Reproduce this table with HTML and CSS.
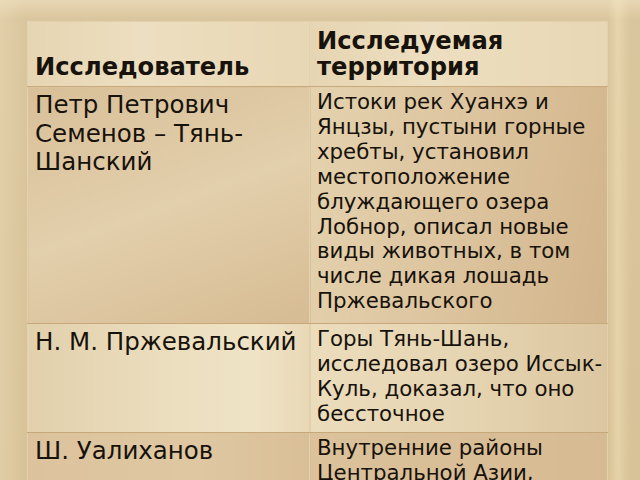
FILE: index.html
```html
<!DOCTYPE html>
<html lang="ru">
<head>
<meta charset="utf-8">
<link rel="stylesheet" href="styles.css">
</head>
<body>
<div class="page">
  <table class="grid">
    <colgroup>
      <col class="col1">
      <col class="col2">
    </colgroup>
    <tr class="head">
      <th>Исследователь</th>
      <th>Исследуемая территория</th>
    </tr>
    <tr class="r1">
      <td class="name">Петр Петрович Семенов – Тянь-Шанский</td>
      <td class="desc">Истоки рек Хуанхэ и Янцзы, пустыни горные хребты, установил местоположение блуждающего озера Лобнор, описал новые виды животных, в том числе дикая лошадь Пржевальского</td>
    </tr>
    <tr class="r2">
      <td class="name">Н. М. Пржевальский</td>
      <td class="desc">Горы Тянь-Шань, исследовал озеро Иссык-Куль, доказал, что оно бессточное</td>
    </tr>
    <tr class="r3">
      <td class="name">Ш. Уалиханов</td>
      <td class="desc">Внутренние районы Центральной Азии, Кашгария</td>
    </tr>
  </table>
</div>
</body>
</html>
```

FILE: styles.css
```css
html, body {
  margin: 0;
  padding: 0;
  height: 100%;
  overflow: hidden;
}
body {
  background:
    linear-gradient(180deg, rgba(245,232,200,0.5) 0%, rgba(245,232,200,0) 4%),
    linear-gradient(90deg, rgba(240,225,190,0.35) 0%, rgba(240,225,190,0) 4%, rgba(255,240,200,0) 95%, rgba(255,240,200,0.35) 96.5%, rgba(255,240,200,0) 98.5%),
    linear-gradient(180deg, #dac69e 0%, #d8c298 100%);
  font-family: "DejaVu Sans", sans-serif;
  color: #17120b;
}
.page {
  padding: 21px 0 0 27px;
}
.grid {
  width: 580px;
  border-collapse: collapse;
  table-layout: fixed;
}
.col1 { width: 282px; }
.col2 { width: 298px; }
th, td {
  padding: 0 2px 0 7px;
  text-align: left;
  vertical-align: top;
  border: 1px solid #e2d1ad;
}
.head { height: 65px; }
.head th {
  vertical-align: bottom;
  font-weight: bold;
  font-size: 24.2px;
  line-height: 26px;
  padding-bottom: 6px;
  background: linear-gradient(90deg, #e6d5b2 0%, #ecdec0 40%, #e8d7b4 100%);
  border-bottom: 1px solid #c7a97b;
}
.name {
  font-size: 24.5px;
  line-height: 28.5px;
  padding-top: 4px;
}
.desc {
  font-size: 21.3px;
  line-height: 24.9px;
  padding-top: 3px;
}
.r1 { height: 237px; }
.r1 td { border-bottom: 1px solid #c6a87b; }
.r1 td:first-child { background: linear-gradient(160deg, #d8bf98 0%, #e2cfab 50%, #d6bb93 100%); }
.r1 td:last-child { background: linear-gradient(100deg, #e4d2ae 0%, #dcc49e 50%, #d2b48b 100%); }
.r2 { height: 109px; }
.r2 td { border-bottom: 1px solid #c6a87b; }
.r2 td:first-child { background: linear-gradient(90deg, #e2d0ac 0%, #ecdfc0 55%, #efe3c6 80%, #e8d8b6 100%); }
.r2 td:last-child { background: linear-gradient(90deg, #ebdcbc 0%, #e6d5b2 50%, #dbc6a0 100%); }
.r3 { height: 60px; }
.r3 td:first-child { background: linear-gradient(90deg, #dcc39d 0%, #dec7a1 60%, #d9bf98 100%); }
.r3 td:last-child { background: linear-gradient(90deg, #dbc29b 0%, #d6ba92 100%); }
```
